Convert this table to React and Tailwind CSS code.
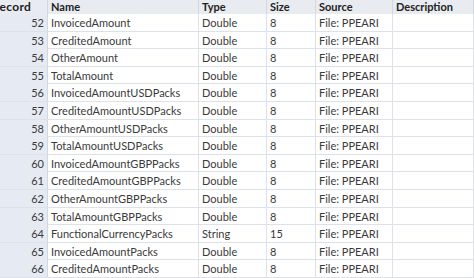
const rows = [
  [52, "InvoicedAmount", "Double", "8"],
  [53, "CreditedAmount", "Double", "8"],
  [54, "OtherAmount", "Double", "8"],
  [55, "TotalAmount", "Double", "8"],
  [56, "InvoicedAmountUSDPacks", "Double", "8"],
  [57, "CreditedAmountUSDPacks", "Double", "8"],
  [58, "OtherAmountUSDPacks", "Double", "8"],
  [59, "TotalAmountUSDPacks", "Double", "8"],
  [60, "InvoicedAmountGBPPacks", "Double", "8"],
  [61, "CreditedAmountGBPPacks", "Double", "8"],
  [62, "OtherAmountGBPPacks", "Double", "8"],
  [63, "TotalAmountGBPPacks", "Double", "8"],
  [64, "FunctionalCurrencyPacks", "String", "15"],
  [65, "InvoicedAmountPacks", "Double", "8"],
  [66, "CreditedAmountPacks", "Double", "8"],
];

const cols = "grid grid-cols-[48px_151px_68px_49px_77px_81px]";

export default function App() {
  return (
    <div className="w-[474px] h-[278px] overflow-hidden bg-white text-[11px] text-[#3a3a3a] font-['Lato',sans-serif]">
      <div className={`${cols} h-[14px] bg-[#e8ebf0] font-bold text-[#222] leading-[14px]`}>
        <div className="border-r border-[#d3d8e0] overflow-hidden whitespace-nowrap">
          <span className="block -ml-[8px] text-[12px] tracking-[0.3px]">Record</span>
        </div>
        <div className="border-r border-[#d3d8e0] pl-[3px]">Name</div>
        <div className="border-r border-[#d3d8e0] pl-[3px]">Type</div>
        <div className="border-r border-[#d3d8e0] pl-[3px]">Size</div>
        <div className="border-r border-[#d3d8e0] pl-[3px]">Source</div>
        <div className="border-r border-[#d3d8e0] pl-[3px]">Description</div>
      </div>
      {rows.map(([n, name, type, size]) => (
        <div key={n} className={`${cols} h-[17.6px] leading-[17px] border-b border-[#dde2ea]`}>
          <div className="bg-[#e6ebf3] border-r border-[#d3d8e0] text-right pr-[3px]">{n}</div>
          <div className="border-r border-[#dde2ea] pl-[3px] whitespace-nowrap">{name}</div>
          <div className="border-r border-[#dde2ea] pl-[3px]">{type}</div>
          <div className="border-r border-[#dde2ea] pl-[3px]">{size}</div>
          <div className="border-r border-[#dde2ea] pl-[3px]">File: PPEARI</div>
          <div className="border-r border-[#dde2ea]"></div>
        </div>
      ))}
    </div>
  );
}
